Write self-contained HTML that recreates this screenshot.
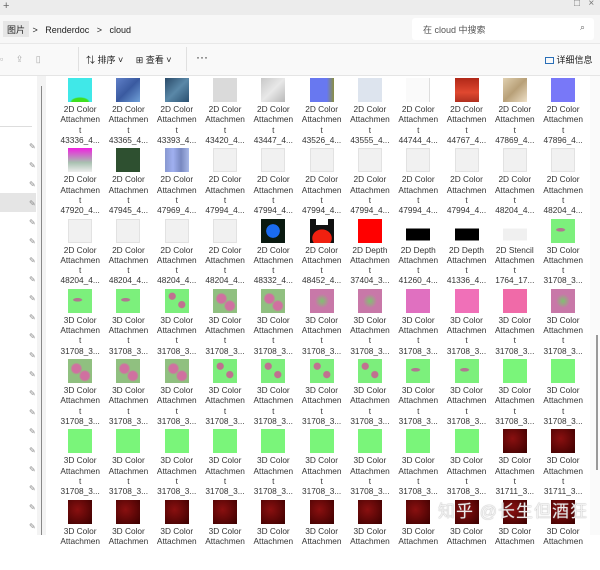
<!DOCTYPE html>
<html><head><meta charset="utf-8"><style>
*{margin:0;padding:0;box-sizing:border-box}
body{width:600px;height:535px;overflow:hidden;background:#fff;font-family:"Liberation Sans","Noto Sans CJK SC",sans-serif;position:relative;color:#222}
.a{position:absolute}
.grid{position:absolute;left:56px;top:78px;display:grid;grid-template-columns:repeat(11,48.3px);grid-auto-rows:70.3px}
.c{text-align:center;font-size:8.3px;line-height:10.3px;color:#333;white-space:nowrap;overflow:hidden}
.c i{display:block;width:24px;height:24px;margin:0 auto 2px}
.k{background:#f1f1f1;border:1px solid #e2e2e2}
.g{background:radial-gradient(ellipse 5px 2px at 40% 45%,#b07890 80%,transparent),#7cf07c}
.g2{background:radial-gradient(circle 4px at 30% 30%,#c07090 80%,transparent),radial-gradient(circle 4px at 70% 65%,#c07090 80%,transparent),#7cee7c}
.p1{background:radial-gradient(circle 6px at 35% 40%,#d070a0 70%,transparent),radial-gradient(circle 6px at 70% 70%,#d070a0 70%,transparent),#90c080}
.p2{background:radial-gradient(circle 7px at 50% 50%,#80c070,transparent),#c878a8}
.pk{background:#f070b8}
.gr{background:#7af57a}
.rd{background:radial-gradient(circle at 40% 40%,#8a1010,#3a0000)}
.pin{position:absolute;left:29px;font-size:8px;color:#888}
</style></head><body>
<div class="a" style="left:0;top:0;width:600px;height:15px;background:#ececec"></div>
<div class="a" style="left:3px;top:0;font-size:11px;color:#666">+</div>
<div class="a" style="left:574px;top:-2px;font-size:10px;color:#777">□ &nbsp; ×</div>
<div class="a" style="left:0;top:15px;width:600px;height:28px;background:#f7f7f7"></div>
<div class="a" style="left:3px;top:21px;width:26px;height:16px;background:#e6e6e6"></div>
<div class="a" style="left:7px;top:23px;font-size:9px;color:#222">图片 &nbsp;&nbsp;&gt;&nbsp;&nbsp; Renderdoc &nbsp;&nbsp;&gt;&nbsp;&nbsp; cloud</div>
<div class="a" style="left:412px;top:18px;width:182px;height:22px;background:#fff;border-radius:3px"></div>
<div class="a" style="left:423px;top:23px;font-size:9px;color:#555">在 cloud 中搜索</div>
<div class="a" style="left:580px;top:22px;font-size:9px;color:#666">⌕</div>
<div class="a" style="left:0;top:43px;width:600px;height:33px;background:#f9f9f9;border-top:1px solid #e8e8e8;border-bottom:1px solid #e5e5e5"></div>
<div class="a" style="left:0;top:54px;font-size:9px;color:#aaa">▫ &nbsp;&nbsp;&nbsp; ⇪ &nbsp;&nbsp;&nbsp; ▯</div>
<div class="a" style="left:78px;top:47px;width:1px;height:24px;background:#e0e0e0"></div>
<div class="a" style="left:86px;top:53px;font-size:9px;color:#222">⇅ 排序 ˅ &nbsp;&nbsp;&nbsp; ⊞ 查看 ˅</div>
<div class="a" style="left:186px;top:47px;width:1px;height:24px;background:#e0e0e0"></div>
<div class="a" style="left:196px;top:50px;font-size:12px;color:#222">···</div>
<div class="a" style="left:545px;top:53px;font-size:9px;color:#222"><span style="display:inline-block;width:9px;height:7px;border:1px solid #2a6fb8;vertical-align:-1px"></span> 详细信息</div>
<div class="a" style="left:0;top:76px;width:37px;height:459px;background:#fff"></div>
<div class="a" style="left:0;top:126px;width:32px;height:1px;background:#ddd"></div>
<div class="a" style="left:0;top:193px;width:36px;height:19px;background:#e5e5e5"></div>
<div class="a" style="left:37px;top:76px;width:9px;height:459px;background:#f3f3f3"></div>
<div class="a" style="left:41px;top:86px;width:1px;height:449px;background:#888"></div>
<div class="pin" style="top:142px">✎</div><div class="pin" style="top:161px">✎</div><div class="pin" style="top:180px">✎</div><div class="pin" style="top:199px">✎</div><div class="pin" style="top:218px">✎</div><div class="pin" style="top:237px">✎</div><div class="pin" style="top:256px">✎</div><div class="pin" style="top:275px">✎</div><div class="pin" style="top:294px">✎</div><div class="pin" style="top:313px">✎</div><div class="pin" style="top:332px">✎</div><div class="pin" style="top:351px">✎</div><div class="pin" style="top:370px">✎</div><div class="pin" style="top:389px">✎</div><div class="pin" style="top:408px">✎</div><div class="pin" style="top:427px">✎</div><div class="pin" style="top:446px">✎</div><div class="pin" style="top:465px">✎</div><div class="pin" style="top:484px">✎</div><div class="pin" style="top:503px">✎</div><div class="pin" style="top:522px">✎</div>
<div class="a" style="left:590px;top:76px;width:10px;height:459px;background:#fafafa"></div>
<div class="a" style="left:596px;top:335px;width:2px;height:135px;background:#999"></div>
<div class="grid">
<div class="c"><i style="background:radial-gradient(ellipse 10px 5px at 50% 100%,#40e020 80%,transparent),#40e8e8"></i>2D Color<br>Attachmen<br>t<br>43336_4...</div>
<div class="c"><i style="background:linear-gradient(135deg,#6080c8,#3a5aa0,#70a0d8)"></i>2D Color<br>Attachmen<br>t<br>43365_4...</div>
<div class="c"><i style="background:linear-gradient(135deg,#2a4a68,#5a88a8,#2a5070)"></i>2D Color<br>Attachmen<br>t<br>43393_4...</div>
<div class="c"><i style="background:#dadada"></i>2D Color<br>Attachmen<br>t<br>43420_4...</div>
<div class="c"><i style="background:linear-gradient(135deg,#c8c8c8,#e8e8e8,#b8b8b8)"></i>2D Color<br>Attachmen<br>t<br>43447_4...</div>
<div class="c"><i style="background:linear-gradient(90deg,#6878f0 70%,#8a9040)"></i>2D Color<br>Attachmen<br>t<br>43526_4...</div>
<div class="c"><i style="background:#dde4ee"></i>2D Color<br>Attachmen<br>t<br>43555_4...</div>
<div class="c"><i style="background:#fafafa;border-right:1px solid #ddd"></i>2D Color<br>Attachmen<br>t<br>44744_4...</div>
<div class="c"><i style="background:linear-gradient(#b02818,#e04830 60%,#b03020)"></i>2D Color<br>Attachmen<br>t<br>44767_4...</div>
<div class="c"><i style="background:linear-gradient(135deg,#e0d0b0,#b8a078,#eee0c8)"></i>2D Color<br>Attachmen<br>t<br>47869_4...</div>
<div class="c"><i style="background:#7878f8"></i>2D Color<br>Attachmen<br>t<br>47896_4...</div>

<div class="c"><i style="background:linear-gradient(#f020e0,#a8c0b0 60%,#eee)"></i>2D Color<br>Attachmen<br>t<br>47920_4...</div>
<div class="c"><i style="background:#2e5030"></i>2D Color<br>Attachmen<br>t<br>47945_4...</div>
<div class="c"><i style="background:linear-gradient(90deg,#8898d0,#a0b0f0,#7888c0,#a8b8e8)"></i>2D Color<br>Attachmen<br>t<br>47969_4...</div>
<div class="c"><i class="k"></i>2D Color<br>Attachmen<br>t<br>47994_4...</div>
<div class="c"><i class="k"></i>2D Color<br>Attachmen<br>t<br>47994_4...</div>
<div class="c"><i class="k"></i>2D Color<br>Attachmen<br>t<br>47994_4...</div>
<div class="c"><i class="k"></i>2D Color<br>Attachmen<br>t<br>47994_4...</div>
<div class="c"><i class="k"></i>2D Color<br>Attachmen<br>t<br>47994_4...</div>
<div class="c"><i class="k"></i>2D Color<br>Attachmen<br>t<br>47994_4...</div>
<div class="c"><i class="k"></i>2D Color<br>Attachmen<br>t<br>48204_4...</div>
<div class="c"><i class="k"></i>2D Color<br>Attachmen<br>t<br>48204_4...</div>

<div class="c"><i class="k"></i>2D Color<br>Attachmen<br>t<br>48204_4...</div>
<div class="c"><i class="k"></i>2D Color<br>Attachmen<br>t<br>48204_4...</div>
<div class="c"><i class="k"></i>2D Color<br>Attachmen<br>t<br>48204_4...</div>
<div class="c"><i class="k"></i>2D Color<br>Attachmen<br>t<br>48204_4...</div>
<div class="c"><i style="background:radial-gradient(circle 7px,#1a6cf0 95%,#0a1a10)"></i>2D Color<br>Attachmen<br>t<br>48332_4...</div>
<div class="c"><i style="background:radial-gradient(ellipse 10px 9px at 50% 80%,#f02010 95%,transparent),linear-gradient(90deg,#111 25%,#fff 25%,#fff 75%,#111 75%) top/100% 6px no-repeat,#111"></i>2D Color<br>Attachmen<br>t<br>48452_4...</div>
<div class="c"><i style="background:#f00"></i>2D Depth<br>Attachmen<br>t<br>37404_3...</div>
<div class="c"><i style="background:linear-gradient(transparent 40%,#000 40%,#000 90%,transparent 90%)"></i>2D Depth<br>Attachmen<br>t<br>41260_4...</div>
<div class="c"><i style="background:linear-gradient(transparent 40%,#000 40%,#000 90%,transparent 90%)"></i>2D Depth<br>Attachmen<br>t<br>41336_4...</div>
<div class="c"><i style="background:linear-gradient(transparent 40%,#f0f0f0 40%,#f0f0f0 90%,transparent 90%)"></i>2D Stencil<br>Attachmen<br>t<br>1764_17...</div>
<div class="c"><i class="g"></i>3D Color<br>Attachmen<br>t<br>31708_3...</div>

<div class="c"><i class="g"></i>3D Color<br>Attachmen<br>t<br>31708_3...</div>
<div class="c"><i class="g"></i>3D Color<br>Attachmen<br>t<br>31708_3...</div>
<div class="c"><i class="g2"></i>3D Color<br>Attachmen<br>t<br>31708_3...</div>
<div class="c"><i class="p1"></i>3D Color<br>Attachmen<br>t<br>31708_3...</div>
<div class="c"><i class="p1"></i>3D Color<br>Attachmen<br>t<br>31708_3...</div>
<div class="c"><i class="p2"></i>3D Color<br>Attachmen<br>t<br>31708_3...</div>
<div class="c"><i class="p2"></i>3D Color<br>Attachmen<br>t<br>31708_3...</div>
<div class="c"><i style="background:#e070c0"></i>3D Color<br>Attachmen<br>t<br>31708_3...</div>
<div class="c"><i class="pk"></i>3D Color<br>Attachmen<br>t<br>31708_3...</div>
<div class="c"><i style="background:#f06aa8"></i>3D Color<br>Attachmen<br>t<br>31708_3...</div>
<div class="c"><i class="p2"></i>3D Color<br>Attachmen<br>t<br>31708_3...</div>

<div class="c"><i class="p1"></i>3D Color<br>Attachmen<br>t<br>31708_3...</div>
<div class="c"><i class="p1"></i>3D Color<br>Attachmen<br>t<br>31708_3...</div>
<div class="c"><i class="p1"></i>3D Color<br>Attachmen<br>t<br>31708_3...</div>
<div class="c"><i class="g2"></i>3D Color<br>Attachmen<br>t<br>31708_3...</div>
<div class="c"><i class="g2"></i>3D Color<br>Attachmen<br>t<br>31708_3...</div>
<div class="c"><i class="g2"></i>3D Color<br>Attachmen<br>t<br>31708_3...</div>
<div class="c"><i class="g2"></i>3D Color<br>Attachmen<br>t<br>31708_3...</div>
<div class="c"><i class="g"></i>3D Color<br>Attachmen<br>t<br>31708_3...</div>
<div class="c"><i class="g"></i>3D Color<br>Attachmen<br>t<br>31708_3...</div>
<div class="c"><i class="gr"></i>3D Color<br>Attachmen<br>t<br>31708_3...</div>
<div class="c"><i class="gr"></i>3D Color<br>Attachmen<br>t<br>31708_3...</div>

<div class="c"><i class="gr"></i>3D Color<br>Attachmen<br>t<br>31708_3...</div>
<div class="c"><i class="gr"></i>3D Color<br>Attachmen<br>t<br>31708_3...</div>
<div class="c"><i class="gr"></i>3D Color<br>Attachmen<br>t<br>31708_3...</div>
<div class="c"><i class="gr"></i>3D Color<br>Attachmen<br>t<br>31708_3...</div>
<div class="c"><i class="gr"></i>3D Color<br>Attachmen<br>t<br>31708_3...</div>
<div class="c"><i class="gr"></i>3D Color<br>Attachmen<br>t<br>31708_3...</div>
<div class="c"><i class="gr"></i>3D Color<br>Attachmen<br>t<br>31708_3...</div>
<div class="c"><i class="gr"></i>3D Color<br>Attachmen<br>t<br>31708_3...</div>
<div class="c"><i class="gr"></i>3D Color<br>Attachmen<br>t<br>31708_3...</div>
<div class="c"><i class="rd"></i>3D Color<br>Attachmen<br>t<br>31711_3...</div>
<div class="c"><i class="rd"></i>3D Color<br>Attachmen<br>t<br>31711_3...</div>

<div class="c"><i class="rd"></i>3D Color<br>Attachmen</div>
<div class="c"><i class="rd"></i>3D Color<br>Attachmen</div>
<div class="c"><i class="rd"></i>3D Color<br>Attachmen</div>
<div class="c"><i class="rd"></i>3D Color<br>Attachmen</div>
<div class="c"><i class="rd"></i>3D Color<br>Attachmen</div>
<div class="c"><i class="rd"></i>3D Color<br>Attachmen</div>
<div class="c"><i class="rd"></i>3D Color<br>Attachmen</div>
<div class="c"><i class="rd"></i>3D Color<br>Attachmen</div>
<div class="c"><i class="rd"></i>3D Color<br>Attachmen</div>
<div class="c"><i class="rd"></i>3D Color<br>Attachmen</div>
<div class="c"><i class="rd"></i>3D Color<br>Attachmen</div>
</div>
<div class="a" style="left:438px;top:497px;font-size:17px;color:rgba(255,255,255,.85);text-shadow:0 0 1px #888;letter-spacing:1px">知乎 @长生但酒狂</div>
</body></html>
